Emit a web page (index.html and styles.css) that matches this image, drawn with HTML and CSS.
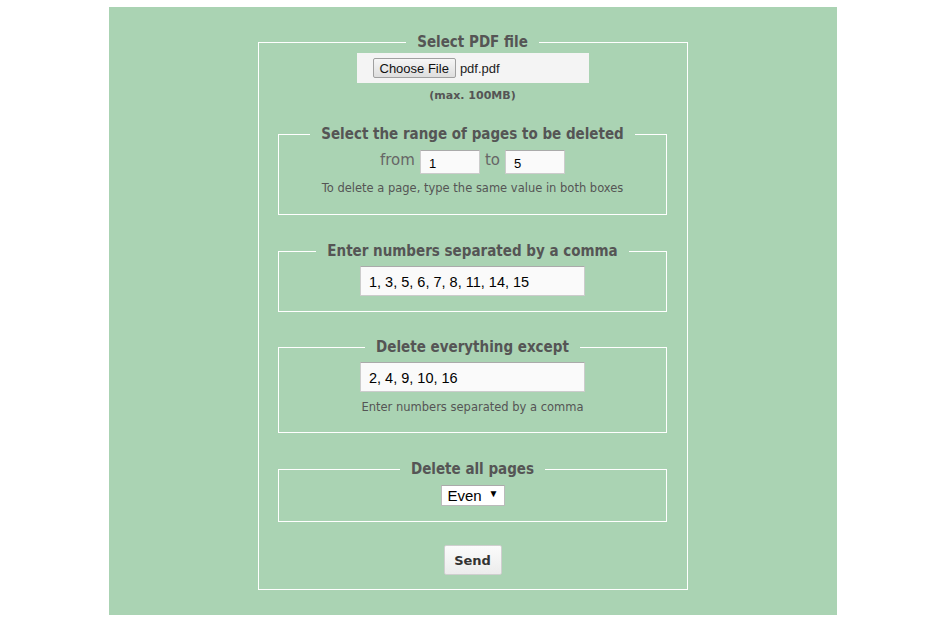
FILE: index.html
```html
<!DOCTYPE html>
<html>
<head>
<meta charset="utf-8">
<title>Delete PDF pages</title>
<link rel="stylesheet" href="styles.css">
</head>
<body>
<div class="panel">
  <form class="form">
    <fieldset class="outer">
      <legend class="legend">Select PDF file</legend>
      <div class="filebox">
        <button type="button" class="filebtn">Choose File</button>
        <span class="filename">pdf.pdf</span>
      </div>
      <div class="max">(max. 100MB)</div>

      <fieldset class="group g1">
        <legend class="legend">Select the range of pages to be deleted</legend>
        <div class="range">
          <span class="lbl">from</span>
          <input class="field small" type="text" value="1">
          <span class="lbl">to</span>
          <input class="field small" type="text" value="5">
        </div>
        <div class="note n1">To delete a page, type the same value in both boxes</div>
      </fieldset>

      <fieldset class="group g2">
        <legend class="legend">Enter numbers separated by a comma</legend>
        <input class="field wide" type="text" value="1, 3, 5, 6, 7, 8, 11, 14, 15">
      </fieldset>

      <fieldset class="group g3">
        <legend class="legend">Delete everything except</legend>
        <input class="field wide" type="text" value="2, 4, 9, 10, 16">
        <div class="note n3">Enter numbers separated by a comma</div>
      </fieldset>

      <fieldset class="group g4">
        <legend class="legend">Delete all pages</legend>
        <div class="select"><span class="opt">Even</span><span class="arrow">▼</span></div>
      </fieldset>

      <button type="button" class="send">Send</button>
    </fieldset>
  </form>
</div>
</body>
</html>
```

FILE: styles.css
```css
html, body {
  margin: 0;
  padding: 0;
  background: #ffffff;
}
body {
  padding-top: 7px;
  font-family: "DejaVu Sans", Verdana, sans-serif;
}
.panel {
  width: 728px;
  height: 582px;
  margin-left: 109px;
  background: #aad3b3;
  padding-top: 26px;
}
.form {
  margin: 0;
}
.outer {
  width: 389px;
  margin: 0 0 0 149px;
  border: 1px solid #ffffff;
  padding: 0 20px 14px 19px;
  display: flex;
  flex-direction: column;
  align-items: center;
  text-align: center;
}
.legend {
  margin: 0 auto;
  padding: 0 11px;
  font-family: "DejaVu Sans Condensed", "DejaVu Sans", sans-serif;
  font-stretch: semi-condensed;
  font-weight: bold;
  font-size: 15px;
  line-height: 18px;
  color: #555555;
}
.filebox {
  margin-top: 2px;
  width: 216px;
  height: 30px;
  padding-left: 16px;
  background: #f4f4f4;
  display: flex;
  align-items: center;
  gap: 4px;
  font-family: "Liberation Sans", Arial, sans-serif;
  font-size: 13px;
  color: #222;
}
.filebtn {
  height: 20px;
  margin: 0;
  padding: 0 6px;
  font-family: "Liberation Sans", Arial, sans-serif;
  font-size: 13px;
  color: #111;
  background: linear-gradient(#f6f6f6, #dedede);
  border: 1px solid #a0a0a0;
  border-radius: 2px;
}
.max {
  margin-top: 6px;
  font-size: 11px;
  line-height: 14px;
  font-weight: bold;
  color: #555555;
}
.group {
  box-sizing: border-box;
  width: 389px;
  margin: 0;
  border: 1px solid #ffffff;
  padding: 0 10px;
  display: flex;
  flex-direction: column;
  align-items: center;
}
.g1 { margin-top: 22px; padding-bottom: 19px; }
.g2 { margin-top: 27px; padding-bottom: 15px; }
.g3 { margin-top: 26px; padding-bottom: 18px; }
.g4 { margin-top: 27px; padding-bottom: 15px; }
.range {
  margin-top: 7px;
  display: flex;
  align-items: center;
  gap: 5px;
  height: 24px;
}
.lbl {
  font-size: 15px;
  color: #666666;
  line-height: 18px;
  margin-top: -5px;
}
.field {
  box-sizing: border-box;
  margin: 0;
  font-family: "Liberation Sans", Arial, sans-serif;
  font-size: 13px;
  color: #000;
  background: #fafafa;
  border: 1px solid #cccccc;
  border-top-color: #aaaaaa;
  border-radius: 0;
  padding: 2px 8px 0;
  outline: none;
}
.small {
  width: 60px;
  height: 24px;
}
.wide {
  margin-top: 6px;
  width: 225px;
  height: 30px;
  font-size: 14.5px;
}
.note {
  font-size: 11.5px;
  line-height: 14px;
  color: #555555;
}
.n1 { margin-top: 7px; }
.n3 { margin-top: 8px; }
.select {
  box-sizing: border-box;
  margin-top: 7px;
  width: 64px;
  height: 21px;
  background: #ffffff;
  border: 1px solid #bbbbbb;
  border-top-color: #aaaaaa;
  display: flex;
  align-items: center;
  justify-content: space-between;
  padding: 0 5px 0 6px;
  font-family: "Liberation Sans", Arial, sans-serif;
  font-size: 15px;
  color: #000;
}
.arrow {
  font-size: 10px;
  margin-top: -4px;
}
.send {
  margin-top: 23px;
  width: 58px;
  height: 30px;
  font-family: "DejaVu Sans", Verdana, sans-serif;
  font-weight: bold;
  font-size: 13px;
  color: #333;
  background: linear-gradient(#fbfbfb, #ececec);
  border: 1px solid #cfcfcf;
  border-radius: 2px;
  padding: 0;
}
```
